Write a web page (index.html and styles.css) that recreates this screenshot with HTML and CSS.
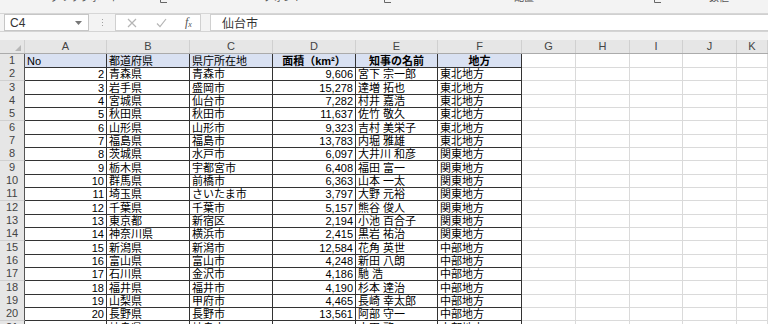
FILE: index.html
```html
<!DOCTYPE html>
<html lang="ja">
<head>
<meta charset="utf-8">
<title>Sheet</title>
<link rel="stylesheet" href="styles.css">
</head>
<body>
<div class="ribbon">
  <span class="rl w1">クリップボード</span>
  <span class="rl w2"><svg class="launch" width="7" height="7" viewBox="0 0 7 7"><path d="M0.5 0v6.5H7" fill="none" stroke="#666"/></svg></span>
  <span class="rl w3">フォント</span>
  <span class="rl w4"><svg class="launch" width="7" height="7" viewBox="0 0 7 7"><path d="M0.5 0v6.5H7" fill="none" stroke="#666"/></svg></span>
  <span class="rl w5">配置</span>
  <span class="rl w6"><svg class="launch" width="7" height="7" viewBox="0 0 7 7"><path d="M0.5 0v6.5H7" fill="none" stroke="#666"/></svg></span>
  <span class="rl w7">数値</span>
</div>
<div class="fbar">
  <div class="namebox"><span>C4</span><svg width="7" height="4" viewBox="0 0 7 4"><path d="M0 0h7L3.5 4z" fill="#777"/></svg></div>
  <div class="dots"><i></i><i></i><i></i></div>
  <div class="fbtns">
    <svg width="10" height="10" viewBox="0 0 10 10"><path d="M1 1l8 8M9 1l-8 8" stroke="#b5b5b5" stroke-width="1.2" fill="none"/></svg>
    <svg width="11" height="10" viewBox="0 0 11 10"><path d="M1 5.5l3 3.2L10 1" stroke="#b5b5b5" stroke-width="1.2" fill="none"/></svg>
    <span class="fx">f<sub>x</sub></span>
  </div>
  <div class="finput">仙台市</div>
</div>
<div class="gap"></div>
<div class="sheet">
  <div class="row hdr">
    <div class="corner"><i></i></div><div class="ch">A</div><div class="ch">B</div><div class="ch">C</div><div class="ch">D</div><div class="ch">E</div><div class="ch">F</div><div class="ch">G</div><div class="ch">H</div><div class="ch">I</div><div class="ch">J</div><div class="ch">K</div><div class="ch"></div>
  </div>
  <div class="row">
    <div class="rh">1</div><div class="c h">No</div><div class="c h">都道府県</div><div class="c h">県庁所在地</div><div class="c h b">面積（km²）</div><div class="c h b">知事の名前</div><div class="c h b">地方</div><div class="g"></div><div class="g"></div><div class="g"></div><div class="g"></div><div class="g"></div><div class="g"></div>
  </div>
  <div class="row"><div class="rh">2</div><div class="c n">2</div><div class="c">青森県</div><div class="c">青森市</div><div class="c n">9,606</div><div class="c">宮下 宗一郎</div><div class="c">東北地方</div><div class="g"></div><div class="g"></div><div class="g"></div><div class="g"></div><div class="g"></div><div class="g"></div></div>
  <div class="row"><div class="rh">3</div><div class="c n">3</div><div class="c">岩手県</div><div class="c">盛岡市</div><div class="c n">15,278</div><div class="c">達増 拓也</div><div class="c">東北地方</div><div class="g"></div><div class="g"></div><div class="g"></div><div class="g"></div><div class="g"></div><div class="g"></div></div>
  <div class="row"><div class="rh">4</div><div class="c n">4</div><div class="c">宮城県</div><div class="c">仙台市</div><div class="c n">7,282</div><div class="c">村井 嘉浩</div><div class="c">東北地方</div><div class="g"></div><div class="g"></div><div class="g"></div><div class="g"></div><div class="g"></div><div class="g"></div></div>
  <div class="row"><div class="rh">5</div><div class="c n">5</div><div class="c">秋田県</div><div class="c">秋田市</div><div class="c n">11,637</div><div class="c">佐竹 敬久</div><div class="c">東北地方</div><div class="g"></div><div class="g"></div><div class="g"></div><div class="g"></div><div class="g"></div><div class="g"></div></div>
  <div class="row"><div class="rh">6</div><div class="c n">6</div><div class="c">山形県</div><div class="c">山形市</div><div class="c n">9,323</div><div class="c">吉村 美栄子</div><div class="c">東北地方</div><div class="g"></div><div class="g"></div><div class="g"></div><div class="g"></div><div class="g"></div><div class="g"></div></div>
  <div class="row"><div class="rh">7</div><div class="c n">7</div><div class="c">福島県</div><div class="c">福島市</div><div class="c n">13,783</div><div class="c">内堀 雅雄</div><div class="c">東北地方</div><div class="g"></div><div class="g"></div><div class="g"></div><div class="g"></div><div class="g"></div><div class="g"></div></div>
  <div class="row"><div class="rh">8</div><div class="c n">8</div><div class="c">茨城県</div><div class="c">水戸市</div><div class="c n">6,097</div><div class="c">大井川 和彦</div><div class="c">関東地方</div><div class="g"></div><div class="g"></div><div class="g"></div><div class="g"></div><div class="g"></div><div class="g"></div></div>
  <div class="row"><div class="rh">9</div><div class="c n">9</div><div class="c">栃木県</div><div class="c">宇都宮市</div><div class="c n">6,408</div><div class="c">福田 富一</div><div class="c">関東地方</div><div class="g"></div><div class="g"></div><div class="g"></div><div class="g"></div><div class="g"></div><div class="g"></div></div>
  <div class="row"><div class="rh">10</div><div class="c n">10</div><div class="c">群馬県</div><div class="c">前橋市</div><div class="c n">6,363</div><div class="c">山本 一太</div><div class="c">関東地方</div><div class="g"></div><div class="g"></div><div class="g"></div><div class="g"></div><div class="g"></div><div class="g"></div></div>
  <div class="row"><div class="rh">11</div><div class="c n">11</div><div class="c">埼玉県</div><div class="c">さいたま市</div><div class="c n">3,797</div><div class="c">大野 元裕</div><div class="c">関東地方</div><div class="g"></div><div class="g"></div><div class="g"></div><div class="g"></div><div class="g"></div><div class="g"></div></div>
  <div class="row"><div class="rh">12</div><div class="c n">12</div><div class="c">千葉県</div><div class="c">千葉市</div><div class="c n">5,157</div><div class="c">熊谷 俊人</div><div class="c">関東地方</div><div class="g"></div><div class="g"></div><div class="g"></div><div class="g"></div><div class="g"></div><div class="g"></div></div>
  <div class="row"><div class="rh">13</div><div class="c n">13</div><div class="c">東京都</div><div class="c">新宿区</div><div class="c n">2,194</div><div class="c">小池 百合子</div><div class="c">関東地方</div><div class="g"></div><div class="g"></div><div class="g"></div><div class="g"></div><div class="g"></div><div class="g"></div></div>
  <div class="row"><div class="rh">14</div><div class="c n">14</div><div class="c">神奈川県</div><div class="c">横浜市</div><div class="c n">2,415</div><div class="c">黒岩 祐治</div><div class="c">関東地方</div><div class="g"></div><div class="g"></div><div class="g"></div><div class="g"></div><div class="g"></div><div class="g"></div></div>
  <div class="row"><div class="rh">15</div><div class="c n">15</div><div class="c">新潟県</div><div class="c">新潟市</div><div class="c n">12,584</div><div class="c">花角 英世</div><div class="c">中部地方</div><div class="g"></div><div class="g"></div><div class="g"></div><div class="g"></div><div class="g"></div><div class="g"></div></div>
  <div class="row"><div class="rh">16</div><div class="c n">16</div><div class="c">富山県</div><div class="c">富山市</div><div class="c n">4,248</div><div class="c">新田 八朗</div><div class="c">中部地方</div><div class="g"></div><div class="g"></div><div class="g"></div><div class="g"></div><div class="g"></div><div class="g"></div></div>
  <div class="row"><div class="rh">17</div><div class="c n">17</div><div class="c">石川県</div><div class="c">金沢市</div><div class="c n">4,186</div><div class="c">馳 浩</div><div class="c">中部地方</div><div class="g"></div><div class="g"></div><div class="g"></div><div class="g"></div><div class="g"></div><div class="g"></div></div>
  <div class="row"><div class="rh">18</div><div class="c n">18</div><div class="c">福井県</div><div class="c">福井市</div><div class="c n">4,190</div><div class="c">杉本 達治</div><div class="c">中部地方</div><div class="g"></div><div class="g"></div><div class="g"></div><div class="g"></div><div class="g"></div><div class="g"></div></div>
  <div class="row"><div class="rh">19</div><div class="c n">19</div><div class="c">山梨県</div><div class="c">甲府市</div><div class="c n">4,465</div><div class="c">長崎 幸太郎</div><div class="c">中部地方</div><div class="g"></div><div class="g"></div><div class="g"></div><div class="g"></div><div class="g"></div><div class="g"></div></div>
  <div class="row"><div class="rh">20</div><div class="c n">20</div><div class="c">長野県</div><div class="c">長野市</div><div class="c n">13,561</div><div class="c">阿部 守一</div><div class="c">中部地方</div><div class="g"></div><div class="g"></div><div class="g"></div><div class="g"></div><div class="g"></div><div class="g"></div></div>
  <div class="row"><div class="rh">21</div><div class="c n">21</div><div class="c">岐阜県</div><div class="c">岐阜市</div><div class="c n">10,621</div><div class="c">古田 肇</div><div class="c">中部地方</div><div class="g"></div><div class="g"></div><div class="g"></div><div class="g"></div><div class="g"></div><div class="g"></div></div>
</div>
</body>
</html>
```
FILE: styles.css
```css
html, body {
  margin: 0;
  padding: 0;
  background: #ffffff;
  overflow: hidden;
}
body {
  width: 768px;
  height: 324px;
  font-family: "Liberation Sans", "Noto Sans CJK JP", sans-serif;
  color: #000;
}
.ribbon {
  height: 13px;
  background: #f3f3f3;
  border-bottom: 1px solid #d6d6d6;
  overflow: hidden;
  display: flex;
  padding-left: 50px;
  box-sizing: content-box;
}
.rl {
  display: block;
  font-size: 10px;
  line-height: 10px;
  margin-top: -7px;
  color: #555;
  white-space: nowrap;
  flex: none;
}
.launch { display: block; margin-top: 3px; }
.w1 { width: 110px; }
.w2 { width: 103px; }
.w3 { width: 121px; }
.w4 { width: 130px; }
.w5 { width: 140px; }
.w6 { width: 55px; }
.w7 { width: 60px; }

.fbar {
  height: 17px;
  background: #f3f3f3;
  display: flex;
  align-items: stretch;
  border-bottom: 1px solid #d4d4d4;
}
.namebox {
  margin-left: 4px;
  width: 85px;
  box-sizing: border-box;
  background: #fff;
  border: 1px solid #c6c6c6;
  display: flex;
  align-items: center;
  justify-content: space-between;
  padding: 0 6px 0 5px;
  font-size: 12px;
  color: #333;
}
.dots {
  width: 26px;
  display: flex;
  flex-direction: column;
  align-items: center;
  justify-content: center;
  gap: 2px;
}
.dots i {
  display: block;
  width: 1px;
  height: 1px;
  background: #a0a0a0;
}
.fbtns {
  width: 86px;
  box-sizing: border-box;
  background: #fff;
  border: 1px solid #d0d0d0;
  display: flex;
  align-items: center;
  padding-left: 11px;
  gap: 19px;
}
.fx {
  font-family: "Liberation Serif", serif;
  font-style: italic;
  font-size: 12px;
  color: #555;
  margin-left: -1px;
}
.fx sub { font-size: 8px; vertical-align: -1px; }
.finput {
  margin-left: 9px;
  flex: 1;
  background: #fff;
  border: 1px solid #d0d0d0;
  border-right: none;
  font-size: 12px;
  color: #333;
  padding-left: 11px;
  display: flex;
  align-items: center;
}
.gap {
  height: 8px;
  background: #f3f3f3;
}

.sheet {
  display: flex;
  flex-direction: column;
}
.row {
  display: grid;
  grid-template-columns: 25px 82px 83px 83px 83px 82px 84px 54px 54px 53px 54px 1fr;
  height: 13.333px;
  font-size: 11px;
  line-height: 12px;
}
.row.hdr {
  height: 13px;
  background: #e6e6e6;
  border-bottom: 1px solid #ababab;
}
.corner {
  position: relative;
  border-right: 1px solid #d0d0d0;
}
.corner i {
  position: absolute;
  right: 3px;
  bottom: 2px;
  width: 0;
  height: 0;
  border-left: 6px solid transparent;
  border-bottom: 6px solid #b8b8b8;
}
.ch {
  text-align: center;
  color: #444;
  border-right: 1px solid #d0d0d0;
  line-height: 13px;
}
.rh {
  background: #e6e6e6;
  color: #444;
  text-align: center;
  border-right: 1px solid #555;
  border-bottom: 1px solid #d0d0d0;
  box-sizing: border-box;
  line-height: 13px;
}
.c {
  box-sizing: border-box;
  border-right: 1px solid #333;
  border-bottom: 1px solid #333;
  padding: 1px 2px 0 2px;
  white-space: nowrap;
  overflow: hidden;
}
.c.n { text-align: right; }
.c.h { background: #d9e1f2; }
.c.b { font-weight: bold; text-align: center; }
.g {
  box-sizing: border-box;
  border-right: 1px solid #dadada;
  border-bottom: 1px solid #dadada;
}
```
